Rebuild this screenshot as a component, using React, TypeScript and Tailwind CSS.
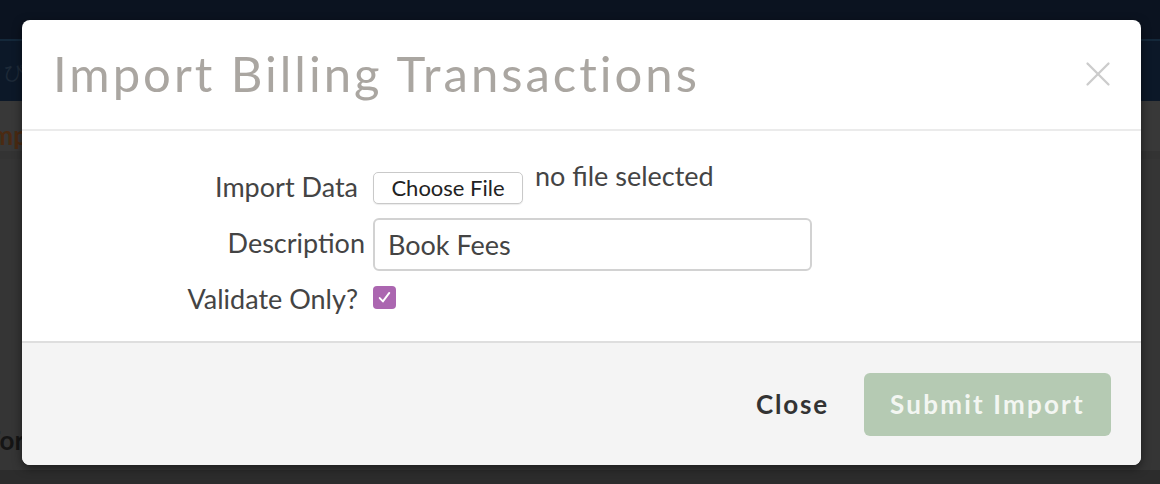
import { X } from "lucide-react";

const font = { fontFamily: "Lato, 'Open Sans', sans-serif" };

const App = () => {
  return (
    <div className="relative w-[1160px] h-[484px] overflow-hidden bg-[#383838]" style={font}>
      {/* page behind the overlay */}
      <div className="flex flex-col h-full">
        <div className="h-[39px] bg-[#0b1320]" />
        <div className="h-[2px] bg-[#14283a]" />
        <div className="h-[60px] bg-[#0c1828] flex items-center pl-1 text-[20px] text-[#1e2a38]">ぴ l</div>
        <div className="h-[50px] flex items-center pt-[18px] text-[26px] font-bold text-[#4a2a12] -ml-[16px]">Imp</div>
        <div className="h-[8px] bg-[#333333]" />
        <div className="flex-1 bg-[#353535] flex items-end pb-[10px] -ml-[14px] text-[26px] font-bold text-[#151515]">Form</div>
        <div className="h-[14px] bg-[#2c2c2c]" />
      </div>

      {/* modal */}
      <div className="absolute left-[22px] top-[20px] w-[1119px] h-[445px] rounded-[8px] bg-white overflow-hidden shadow-[0_3px_10px_rgba(0,0,0,0.5)] flex flex-col">
        <div className="h-[111px] flex items-center justify-between pl-[31px] pr-[22px] border-b-2 border-[#ebebeb]">
          <h1 className="text-[49px] leading-none text-[#aaa6a1] tracking-[3px] mt-[-2px]">Import Billing Transactions</h1>
          <X className="w-[42px] h-[42px] text-[#cccccc] mt-[-2px]" strokeWidth={1.3} />
        </div>

        <div className="flex-1 pt-[41px]">
          <div className="flex items-start h-[46px]">
            <label className="w-[336px] text-right text-[27px] leading-none text-[#444] mt-[1px]">Import Data</label>
            <div className="ml-[15px] flex items-start">
              <button className="h-[32px] w-[150px] rounded-[5px] border border-[#c9c9c9] bg-white text-[22px] leading-none text-[#222] shadow-[0_1px_1px_rgba(0,0,0,0.08)]">
                Choose File
              </button>
              <span className="ml-[12px] text-[27px] text-[#444] leading-none mt-[-10px]">no file selected</span>
            </div>
          </div>
          <div className="flex items-start h-[53px]">
            <label className="w-[343px] text-right text-[27px] leading-none text-[#444] mt-[11px]">Description</label>
            <div className="ml-[8px] h-[53px] w-[439px] rounded-[6px] border-2 border-[#d2d2d2] flex items-center px-[13px] text-[27px] leading-none text-[#444]">
              Book Fees
            </div>
          </div>
          <div className="flex items-start mt-[15px]">
            <label className="w-[336px] text-right text-[27px] leading-none text-[#444] mt-[-1px]">Validate Only?</label>
            <div className="ml-[15px] w-[23px] h-[23px] rounded-[4px] bg-[#ab66b0] flex items-center justify-center">
              <svg viewBox="0 0 16 16" className="w-[17px] h-[17px]" fill="none" stroke="white" strokeWidth="1.8" strokeLinecap="round" strokeLinejoin="round">
                <path d="M3.5 8.5l3 3.2 6-8" />
              </svg>
            </div>
          </div>
        </div>

        <div className="h-[124px] bg-[#f4f4f4] border-t-2 border-[#dedede] flex items-center justify-end pr-[30px] gap-[35px]">
          <span className="text-[26px] font-bold text-[#333] tracking-[1.8px]">Close</span>
          <button className="h-[63px] w-[247px] rounded-[6px] bg-[#b5cab3] text-[26px] font-bold text-[#f3f6f2] tracking-[2.2px]">
            Submit Import
          </button>
        </div>
      </div>
    </div>
  );
};

export default App;
